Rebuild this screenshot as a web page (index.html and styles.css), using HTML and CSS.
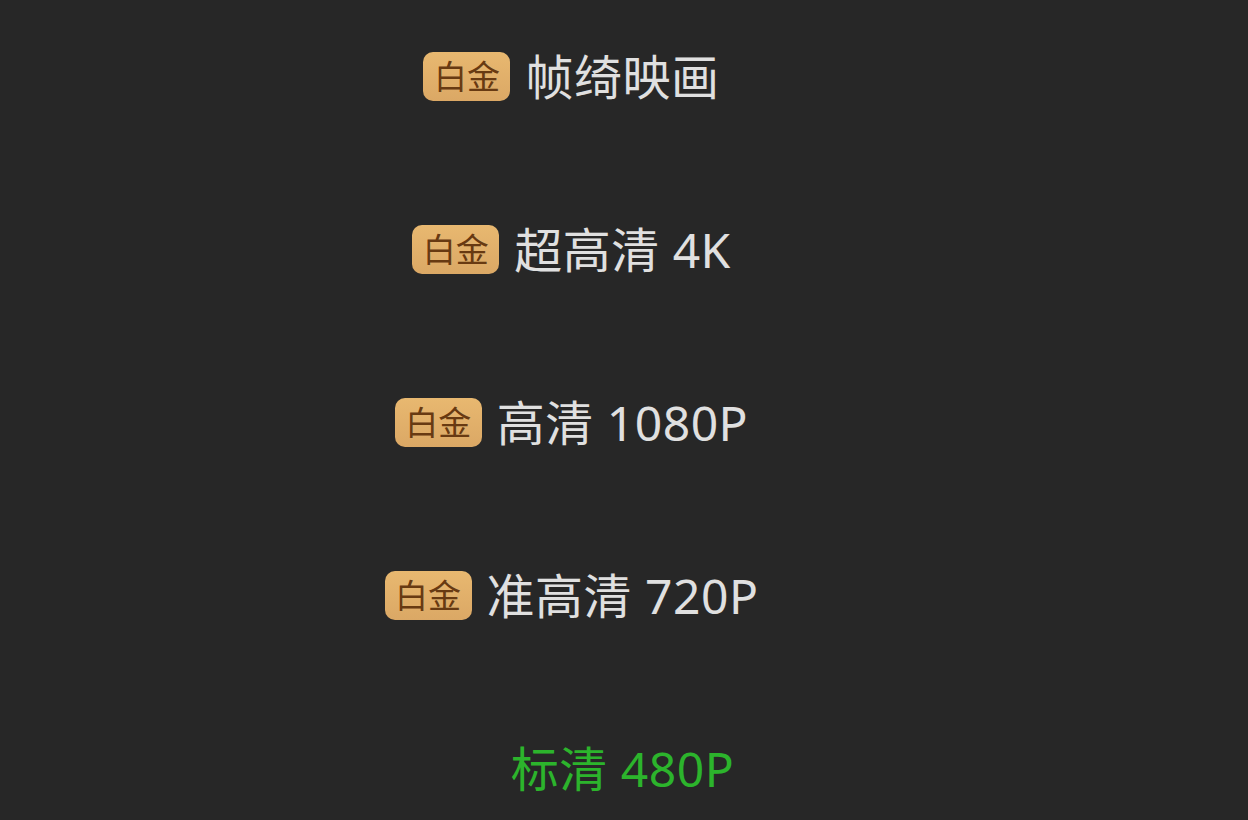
FILE: index.html
```html
<!DOCTYPE html>
<html lang="zh-CN">
<head>
    <meta charset="UTF-8">
    <meta name="viewport" content="width=device-width, initial-scale=1.0">
    <title>清晰度</title>
    <link rel="stylesheet" href="styles.css">
</head>
<body>
    <ul class="quality-list">
        <li class="quality-item">
            <span class="badge">白金</span>
            <span class="label">帧绮映画</span>
        </li>
        <li class="quality-item">
            <span class="badge">白金</span>
            <span class="label">超高清 4K</span>
        </li>
        <li class="quality-item">
            <span class="badge">白金</span>
            <span class="label">高清 1080P</span>
        </li>
        <li class="quality-item">
            <span class="badge">白金</span>
            <span class="label">准高清 720P</span>
        </li>
        <li class="quality-item active">
            <span class="badge hidden">白金</span>
            <span class="label">标清 480P</span>
        </li>
    </ul>
</body>
</html>
```

FILE: styles.css
```css
body {
    margin: 0;
    background: #272727;
    font-family: "Noto Sans", "Noto Sans CJK SC", sans-serif;
    height: 100vh;
    overflow: hidden;
}
.quality-list {
    list-style: none;
    margin: 0;
    padding: 52px 105px 0 0;
    display: flex;
    flex-direction: column;
    gap: 124px;
}
.quality-item {
    display: flex;
    align-items: center;
    justify-content: center;
    gap: 15px;
    height: 49px;
}
.badge {
    display: flex;
    align-items: center;
    justify-content: center;
    width: 87px;
    height: 49px;
    border-radius: 10px;
    background: linear-gradient(180deg, #e8b870, #dba865);
    color: #683a12;
    font-size: 33px;
    line-height: 1;
}
.badge.hidden {
    visibility: hidden;
}
.label {
    color: #e0e0e0;
    font-size: 48px;
    letter-spacing: 0.5px;
    line-height: 1;
}
.active .label {
    color: #2cb42c;
}
```
